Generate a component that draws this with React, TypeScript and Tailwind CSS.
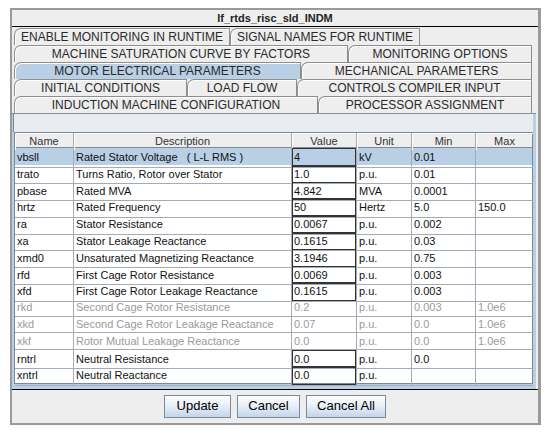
import React from 'react'

type Row = { name: string; desc: string; value: string; unit: string; min: string; max: string; off?: boolean }

const ROWS: Row[] = [
  { name: 'vbsll', desc: 'Rated Stator Voltage   ( L-L RMS )', value: '4', unit: 'kV', min: '0.01', max: '' },
  { name: 'trato', desc: 'Turns Ratio, Rotor over Stator', value: '1.0', unit: 'p.u.', min: '0.01', max: '' },
  { name: 'pbase', desc: 'Rated MVA', value: '4.842', unit: 'MVA', min: '0.0001', max: '' },
  { name: 'hrtz', desc: 'Rated Frequency', value: '50', unit: 'Hertz', min: '5.0', max: '150.0' },
  { name: 'ra', desc: 'Stator Resistance', value: '0.0067', unit: 'p.u.', min: '0.002', max: '' },
  { name: 'xa', desc: 'Stator Leakage Reactance', value: '0.1615', unit: 'p.u.', min: '0.03', max: '' },
  { name: 'xmd0', desc: 'Unsaturated Magnetizing Reactance', value: '3.1946', unit: 'p.u.', min: '0.75', max: '' },
  { name: 'rfd', desc: 'First Cage Rotor Resistance', value: '0.0069', unit: 'p.u.', min: '0.003', max: '' },
  { name: 'xfd', desc: 'First Cage Rotor Leakage Reactance', value: '0.1615', unit: 'p.u.', min: '0.003', max: '' },
  { name: 'rkd', desc: 'Second Cage Rotor Resistance', value: '0.2', unit: 'p.u.', min: '0.003', max: '1.0e6', off: true },
  { name: 'xkd', desc: 'Second Cage Rotor Leakage Reactance', value: '0.07', unit: 'p.u.', min: '0.0', max: '1.0e6', off: true },
  { name: 'xkf', desc: 'Rotor Mutual Leakage Reactance', value: '0.0', unit: 'p.u.', min: '0.0', max: '1.0e6', off: true },
  { name: 'rntrl', desc: 'Neutral Resistance', value: '0.0', unit: 'p.u.', min: '0.0', max: '' },
  { name: 'xntrl', desc: 'Neutral Reactance', value: '0.0', unit: 'p.u.', min: '', max: '' },
]

// tab runs, top to bottom, widths in px
const TABS: { label: string; w: number; sel?: boolean }[][] = [
  [{ label: 'ENABLE MONITORING IN RUNTIME', w: 216 }, { label: 'SIGNAL NAMES FOR RUNTIME', w: 190 }],
  [{ label: 'MACHINE SATURATION CURVE BY FACTORS', w: 334 }, { label: 'MONITORING OPTIONS', w: 184 }],
  [{ label: 'MOTOR ELECTRICAL PARAMETERS', w: 287, sel: true }, { label: 'MECHANICAL PARAMETERS', w: 231 }],
  [{ label: 'INITIAL CONDITIONS', w: 173 }, { label: 'LOAD FLOW', w: 110 }, { label: 'CONTROLS COMPILER INPUT', w: 235 }],
  [{ label: 'INDUCTION MACHINE CONFIGURATION', w: 304 }, { label: 'PROCESSOR ASSIGNMENT', w: 214 }],
]

const HEAD = ['Name', 'Description', 'Value', 'Unit', 'Min', 'Max']
const COLS = 'grid grid-cols-[59px_218px_65px_55px_64px_57px]'

function Btn({ children, w }: { children: React.ReactNode; w: string }) {
  return (
    <button className={`${w} h-[23px] border border-[#7a8a99] bg-gradient-to-b from-[#ffffff] via-[#e6eef7] to-[#c3d5e9] text-[13px] text-black`}>
      {children}
    </button>
  )
}

export default function App() {
  return (
    <div className="w-[550px] h-[436px] bg-white pl-[10px] pt-[8px]" style={{ fontFamily: '"Liberation Sans", Arial, sans-serif' }}>
      <div className="w-[531px] h-[417px] border-2 border-[#9a9a9a] border-r-[3px] flex flex-col bg-[#eeeeee]">
        {/* title */}
        <div className="h-[17px] border-b border-black flex items-center justify-center text-[11px] font-bold text-[#222]">
          lf_rtds_risc_sld_INDM
        </div>

        {/* tab runs */}
        <div className="mt-px pl-[2px] flex flex-col">
          {TABS.map((run, i) => (
            <div key={i} className="flex h-[17px]">
              {run.map(t => (
                <div
                  key={t.label}
                  style={{ width: t.w }}
                  className={`flex items-center justify-center border-t border-l border-r border-[#8e8e8e] rounded-tl-[7px] text-[12px] leading-none text-[#2a2a2a] shadow-[inset_1px_1px_0_#ffffff] ${t.sel ? 'bg-[#b8cfe5]' : 'bg-[#eeeeee]'}`}
                >
                  {t.label}
                </div>
              ))}
            </div>
          ))}
        </div>

        {/* content */}
        <div className="h-[276px] mr-[2px] border-t border-[#8e8e8e] bg-[#b8cfe5] pl-px pr-[3px] pb-[4px] flex flex-col">
          <div className="h-[18px] bg-[#e9edf2] border-l border-[#7a8a99]" />
          <div className="ml-px border border-[#7a8a99] bg-white text-[11px] text-black">
            <div className={`${COLS} h-[15px] bg-[#eeeeee] border-b border-[#7a8a99]`}>
              {HEAD.map(h => (
                <div key={h} className="border-r border-[#a3acb6] last:border-r-0 flex items-center justify-center text-[#333] shadow-[inset_1px_1px_0_#ffffff]">
                  {h}
                </div>
              ))}
            </div>
            {ROWS.map((r, i) => {
              const sel = i === 0
              const txt = r.off ? 'text-[#9a9a9a]' : 'text-[#111]'
              const cell = `border-r border-b border-[#a3acb6] flex items-center pl-[2px] whitespace-pre overflow-hidden ${txt}`
              return (
                <div key={r.name} className={`${COLS} h-[16.8px] ${sel ? 'bg-[#b8cfe5]' : 'bg-white'}`}>
                  <div className={cell}>{r.name}</div>
                  <div className={cell}>{r.desc}</div>
                  <div className={`border-r border-b border-[#a3acb6] ${txt}`}>
                    <div className={`h-full flex items-center ${r.off ? 'pl-[2px]' : 'pl-px border-[1.5px] border-[#333]'}`}>{r.value}</div>
                  </div>
                  <div className={cell}>{r.unit}</div>
                  <div className={cell}>{r.min}</div>
                  <div className={`${cell} border-r-0`}>{r.max}</div>
                </div>
              )
            })}
          </div>
        </div>

        {/* buttons */}
        <div className="flex-1 border-t border-black flex items-center justify-center gap-[6px] pb-px">
          <Btn w="w-[67px]">Update</Btn>
          <Btn w="w-[63px]">Cancel</Btn>
          <Btn w="w-[80px]">Cancel All</Btn>
        </div>
      </div>
    </div>
  )
}
